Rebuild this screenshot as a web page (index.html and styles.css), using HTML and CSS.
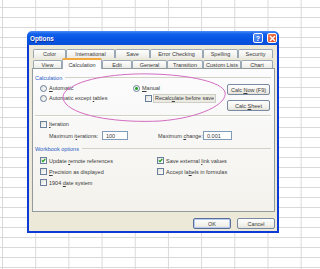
FILE: index.html
```html
<!DOCTYPE html>
<html lang="en">
<head>
    <meta charset="UTF-8">
    <title>Options</title>
    <link rel="stylesheet" href="styles.css">
</head>
<body>

<div class="dialog">
    <div class="titlebar">
        <span class="title">Options</span>
        <div class="title-buttons">
            <span class="tb-btn help">?</span>
            <span class="tb-btn close">
                <svg width="7" height="7" viewBox="0 0 7 7"><path d="M1 1 L6 6 M6 1 L1 6" stroke="#fff" stroke-width="1.4"/></svg>
            </span>
        </div>
    </div>

    <div class="dialog-body">
        <div class="tabs">
            <div class="tab-row back">
                <span class="tab">Color</span>
                <span class="tab">International</span>
                <span class="tab">Save</span>
                <span class="tab">Error Checking</span>
                <span class="tab">Spelling</span>
                <span class="tab">Security</span>
            </div>
            <div class="tab-row front">
                <span class="tab">View</span>
                <span class="tab active">Calculation</span>
                <span class="tab">Edit</span>
                <span class="tab">General</span>
                <span class="tab">Transition</span>
                <span class="tab">Custom Lists</span>
                <span class="tab">Chart</span>
            </div>
        </div>

        <div class="panel">
            <div class="group-label">Calculation</div>

            <div class="calc">
                <div class="calc-col first">
                    <label class="opt"><span class="radio"></span><span><u>A</u>utomatic</span></label>
                    <label class="opt"><span class="radio"></span><span>Automatic except <u>t</u>ables</span></label>
                </div>
                <div class="calc-col second">
                    <label class="opt"><span class="radio on"></span><span><u>M</u>anual</span></label>
                    <label class="opt indent"><span class="check"></span><span class="boxed">Recalc<u>u</u>late before save</span></label>
                </div>
                <div class="calc-col buttons">
                    <span class="btn"><span>Calc <u>N</u>ow (F9)</span></span>
                    <span class="btn"><span>Calc <u>S</u>heet</span></span>
                </div>
            </div>

            <div class="sep"></div>

            <label class="opt iter"><span class="check"></span><span><u>I</u>teration</span></label>

            <div class="limits">
                <span class="field-label iterations">Maximum i<u>t</u>erations:</span>
                <span class="input narrow">100</span>
                <span class="field-label change">Maximum <u>c</u>hange:</span>
                <span class="input wide">0.001</span>
            </div>

            <div class="group-label workbook">Workbook options</div>

            <div class="workbook-grid">
                <label class="opt"><span class="check"><svg width="5" height="5" viewBox="0 0 5 5"><path d="M0.8 2.4 L2 3.7 L4.3 1" stroke="#21a121" stroke-width="1.2" fill="none"/></svg></span><span>Update <u>r</u>emote references</span></label>
                <label class="opt"><span class="check"><svg width="5" height="5" viewBox="0 0 5 5"><path d="M0.8 2.4 L2 3.7 L4.3 1" stroke="#21a121" stroke-width="1.2" fill="none"/></svg></span><span>Save external <u>l</u>ink values</span></label>
                <label class="opt"><span class="check"></span><span><u>P</u>recision as displayed</span></label>
                <label class="opt"><span class="check"></span><span>Accept la<u>b</u>els in formulas</span></label>
                <label class="opt"><span class="check"></span><span>1904 <u>d</u>ate system</span></label>
            </div>
        </div>

        <div class="actions">
            <span class="btn default">OK</span>
            <span class="btn">Cancel</span>
        </div>
    </div>
</div>

<!-- hand drawn mark on top of the screenshot -->
<svg class="scribble" width="320" height="269" viewBox="0 0 320 269">
    <path d="M68 90 C80 78, 120 73, 152 74 C190 75, 222 82, 225 92 C228 104, 200 118, 160 121 C120 123, 78 117, 66 104 C60 97, 64 91, 70 88" fill="none" stroke="#d46cc0" stroke-width="1"/>
</svg>

</body>
</html>
```

FILE: styles.css
```css
body {
    margin: 0;
    padding: 31px 0 0 27px;
    height: 269px;
    box-sizing: border-box;
    position: relative;
    overflow: hidden;
    font-family: "Liberation Sans", Arial, sans-serif;
    font-size: 5.5px;
    color: #3a3a3a;
    background-color: #fff;
    background-image:
        linear-gradient(to right, #d9d9d9 1px, transparent 1px),
        linear-gradient(to bottom, #d9d9d9 1px, transparent 1px);
    background-size: 33.2px 100%, 100% 10px;
    background-position: 2px 0, 0 7px;
}

u {
    text-decoration-thickness: 0.5px;
}

.dialog {
    width: 252px;
}

/* title bar */
.titlebar {
    height: 14px;
    box-sizing: border-box;
    padding: 0 2px 0 3px;
    display: flex;
    align-items: center;
    justify-content: space-between;
    border-radius: 5px 5px 0 0;
    background: linear-gradient(#4a8ef8 0, #1160ea 3px, #0553e2 60%, #0a4fd8 100%);
}

.title {
    color: #fff;
    font-weight: bold;
    font-size: 6.3px;
    text-shadow: 0.5px 0.5px #0a2a9a;
}

.title-buttons {
    display: flex;
    gap: 4px;
}

.tb-btn {
    width: 10px;
    height: 10px;
    box-sizing: border-box;
    border: 1px solid #fff;
    border-radius: 2px;
    display: flex;
    align-items: center;
    justify-content: center;
    color: #fff;
    font-weight: bold;
    font-size: 7px;
}

.tb-btn.help {
    background: linear-gradient(135deg, #5b95f8, #2262e8);
}

.tb-btn.close {
    background: linear-gradient(135deg, #f0825c, #d8441a);
}

/* body */
.dialog-body {
    background-color: #ece9d8;
    border: 2px solid #0b3ad4;
    border-top: none;
    padding: 4px 2px 2px 3px;
}

.tabs {
    padding-left: 1px;
}

.tab-row {
    display: grid;
}

.tab-row.back {
    grid-template-columns: 33px 49px 35px 53px 35px 35px;
    grid-template-rows: 9px;
}

.tab-row.front {
    grid-template-columns: 29px 40px 30px 35px 36px 38px 32px;
    grid-template-rows: 10px;
}

.tab {
    box-sizing: border-box;
    border: 1px solid #99a8b4;
    border-bottom: none;
    border-radius: 2px 2px 0 0;
    background: linear-gradient(#fefefe, #ecebe5);
    display: flex;
    align-items: center;
    justify-content: center;
    white-space: nowrap;
}

.tab-row.front .tab {
    margin-top: 2px;
}

.tab-row.front .tab.active {
    margin-top: 0;
    height: 11px;
    align-self: start;
    position: relative;
    z-index: 1;
    border-top: 2px solid #f2a83a;
    background: #fcfcfe;
}

.panel {
    height: 144px;
    box-sizing: border-box;
    border: 1px solid #919b9c;
    background: linear-gradient(#fcfcfe, #f3f2ec);
    padding: 4px 3px 0 2px;
}

.group-label {
    height: 9px;
    display: flex;
    align-items: center;
    gap: 3px;
    color: #2a5cc4;
}

.group-label::after {
    content: "";
    flex: 1;
    border-top: 1px solid #d3d2c6;
}

.group-label.workbook {
    margin-top: 4px;
}

.opt {
    height: 10px;
    display: flex;
    align-items: center;
    gap: 2px;
    white-space: nowrap;
}

.radio,
.check {
    width: 7px;
    height: 7px;
    flex: none;
    box-sizing: border-box;
    border: 1px solid #6a7f9c;
    background: linear-gradient(135deg, #e0e0da, #fff);
    display: flex;
    align-items: center;
    justify-content: center;
}

.radio {
    border-radius: 50%;
}

.radio.on {
    background: radial-gradient(circle, #28a828 1.3px, #fff 1.6px);
}

.calc {
    display: flex;
    margin-top: 1px;
    padding-left: 5px;
}

.calc-col.first {
    width: 93px;
}

.calc-col.second {
    width: 94px;
}

.opt.indent {
    padding-left: 12px;
    gap: 1px;
}

.boxed {
    background: #ecebe3;
    border: 1px solid #cfcec5;
    padding: 0 1px;
    line-height: 7px;
}

.calc-col.buttons {
    display: flex;
    flex-direction: column;
    gap: 5px;
    padding-top: 1px;
}

.btn {
    width: 43px;
    height: 11px;
    box-sizing: border-box;
    border: 1px solid #7889a2;
    border-radius: 2px;
    background: linear-gradient(#fefefe, #f1f0ea 70%, #e2e0d6);
    display: flex;
    align-items: center;
    justify-content: center;
    white-space: nowrap;
}

.sep {
    margin-top: 4px;
    border-top: 1px solid #d3d2c6;
    border-bottom: 1px solid #fff;
}

.opt.iter {
    margin-top: 2px;
    padding-left: 5px;
}

.limits {
    margin-top: 2px;
    height: 9px;
    padding-left: 14px;
    display: flex;
    align-items: center;
}

.field-label {
    white-space: nowrap;
}

.field-label.iterations {
    width: 53px;
}

.field-label.change {
    margin-left: 30px;
    width: 45px;
}

.input {
    height: 9px;
    box-sizing: border-box;
    border: 1px solid #7f9db9;
    background: #fff;
    padding-left: 3px;
    display: flex;
    align-items: center;
}

.input.narrow {
    width: 26px;
}

.input.wide {
    width: 29px;
}

.workbook-grid {
    margin-top: 2px;
    padding-left: 5px;
    display: grid;
    grid-template-columns: 117px 1fr;
    grid-auto-rows: 11px;
}

.workbook-grid .opt {
    height: 11px;
}

.actions {
    margin-top: 6px;
    display: flex;
    justify-content: flex-end;
    gap: 6px;
}

.actions .btn {
    width: 38px;
}

.btn.default {
    border-color: #5b6f96;
    box-shadow: inset 0 0 0 1px #b6cbef;
}

.scribble {
    position: absolute;
    left: 0;
    top: 0;
    pointer-events: none;
}
```
